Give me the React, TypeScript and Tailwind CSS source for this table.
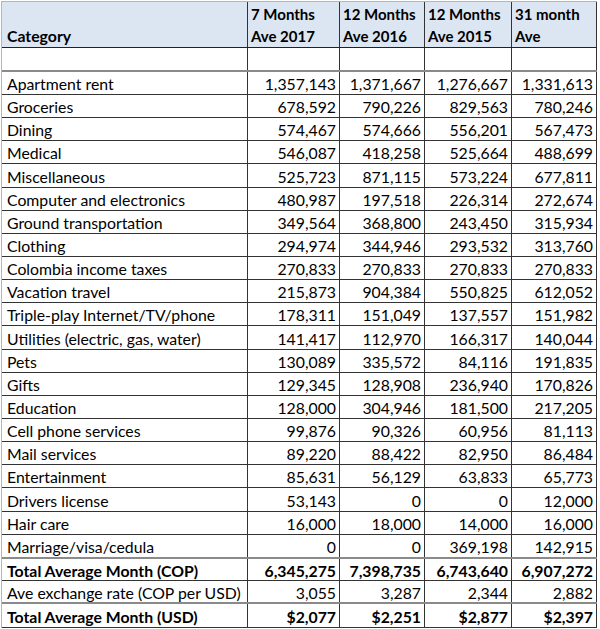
import React from "react";

type Row = { label: string; v: string[]; bold?: boolean; h: string };

const base: { label: string; v: string[]; bold?: boolean }[] = [
  { label: "Apartment rent", v: ["1,357,143", "1,371,667", "1,276,667", "1,331,613"] },
  { label: "Groceries", v: ["678,592", "790,226", "829,563", "780,246"] },
  { label: "Dining", v: ["574,467", "574,666", "556,201", "567,473"] },
  { label: "Medical", v: ["546,087", "418,258", "525,664", "488,699"] },
  { label: "Miscellaneous", v: ["525,723", "871,115", "573,224", "677,811"] },
  { label: "Computer and electronics", v: ["480,987", "197,518", "226,314", "272,674"] },
  { label: "Ground transportation", v: ["349,564", "368,800", "243,450", "315,934"] },
  { label: "Clothing", v: ["294,974", "344,946", "293,532", "313,760"] },
  { label: "Colombia income taxes", v: ["270,833", "270,833", "270,833", "270,833"] },
  { label: "Vacation travel", v: ["215,873", "904,384", "550,825", "612,052"] },
  { label: "Triple-play Internet/TV/phone", v: ["178,311", "151,049", "137,557", "151,982"] },
  { label: "Utilities (electric, gas, water)", v: ["141,417", "112,970", "166,317", "140,044"] },
  { label: "Pets", v: ["130,089", "335,572", "84,116", "191,835"] },
  { label: "Gifts", v: ["129,345", "128,908", "236,940", "170,826"] },
  { label: "Education", v: ["128,000", "304,946", "181,500", "217,205"] },
  { label: "Cell phone services", v: ["99,876", "90,326", "60,956", "81,113"] },
  { label: "Mail services", v: ["89,220", "88,422", "82,950", "86,484"] },
  { label: "Entertainment", v: ["85,631", "56,129", "63,833", "65,773"] },
  { label: "Drivers license", v: ["53,143", "0", "0", "12,000"] },
  { label: "Hair care", v: ["16,000", "18,000", "14,000", "16,000"] },
  { label: "Marriage/visa/cedula", v: ["0", "0", "369,198", "142,915"] },
  { label: "Total Average Month (COP)", v: ["6,345,275", "7,398,735", "6,743,640", "6,907,272"], bold: true },
  { label: "Ave exchange rate (COP per USD)", v: ["3,055", "3,287", "2,344", "2,882"] },
  { label: "Total Average Month (USD)", v: ["$2,077", "$2,251", "$2,877", "$2,397"], bold: true },
];

const heightFor = (idx: number): string => {
  if (idx === 20) return "h-[24px] border-b-2 border-[#8a8a8a]";
  if (idx === 21) return "h-[22px] border-b border-[#333]";
  if (idx === 22) return "h-[23px] border-b-2 border-[#8a8a8a]";
  if (idx === 23) return "h-[24px] border-b border-[#333]";
  if (idx === 4 || idx === 11 || idx === 18) return "h-[24px] border-b border-[#333]";
  return "h-[23px] border-b border-[#333]";
};

const rows: Row[] = base.map((r, i) => ({ ...r, h: heightFor(i) }));

const grid = "grid grid-cols-[246px_92px_85px_87px_85px]";
const cell = "border-r border-[#333] flex items-center";

export default function App() {
  return (
    <div className="w-[600px] h-[629px] bg-white text-black" style={{ fontFamily: "Lato, 'Liberation Sans', sans-serif" }}>
      <div className="ml-[1px] mt-[1px] w-[596px] border-l border-t border-[#b5b5b5] text-[15.8px] leading-none">
        {/* header */}
        <div className={`${grid} h-[46px] bg-[#dce6f2] font-bold border-b border-[#222]`}>
          <div className={`${cell} items-end pl-[5px] pb-[3px]`}>Category</div>
          {[
            ["7 Months", "Ave 2017"],
            ["12 Months", "Ave 2016"],
            ["12 Months", "Ave 2015"],
            ["31 month", "Ave"],
          ].map((h, i) => (
            <div key={i} className={`${cell} flex-col !items-start justify-end pl-[3px] pb-[3px] gap-[7px] text-[15px] whitespace-nowrap overflow-hidden`}>
              <span>{h[0]}</span>
              <span>{h[1]}</span>
            </div>
          ))}
        </div>
        {/* empty row */}
        <div className={`${grid} h-[24px] border-b-2 border-[#8a8a8a]`}>
          {[0, 1, 2, 3, 4].map((i) => (
            <div key={i} className={cell} />
          ))}
        </div>
        {rows.map((r) => (
          <div key={r.label} className={`${grid} ${r.h} ${r.bold ? "font-bold" : ""}`}>
            <div className={`${cell} pl-[5px] pt-[2px] whitespace-nowrap`}>{r.label}</div>
            {r.v.map((v, i) => (
              <div key={i} className={`${cell} justify-end pr-[3px] pt-[2px]`}>
                {v}
              </div>
            ))}
          </div>
        ))}
      </div>
    </div>
  );
}
